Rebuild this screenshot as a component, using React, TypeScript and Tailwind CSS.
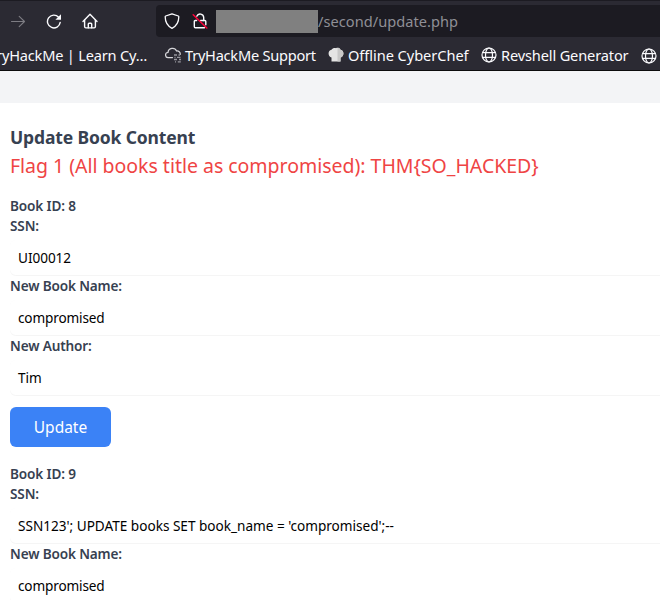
import { ReactNode } from "react"
import clsx from "clsx"

function ForwardIcon() {
  return (
    <svg className="size-4" viewBox="0 0 16 16" fill="none" stroke="#7d7c83" strokeWidth="1.1" strokeLinecap="round" strokeLinejoin="round">
      <path d="M1.5 8.5h13M9.2 3.3l5.3 5.2-5.3 5.2" />
    </svg>
  )
}

function ReloadIcon() {
  return (
    <svg className="size-4" viewBox="0 0 16 16" fill="none" stroke="#fbfbfe" strokeWidth="1.4" strokeLinecap="round">
      <path d="M14.2 9.4A6.4 6.4 0 1 1 12.6 4.2" />
      <path d="M15 1.2v5.6H9.4z" fill="#fbfbfe" stroke="none" />
    </svg>
  )
}

function HomeIcon() {
  return (
    <svg className="size-4" viewBox="0 0 16 16" fill="none" stroke="#fbfbfe" strokeWidth="1.4" strokeLinecap="round" strokeLinejoin="round">
      <path d="M1 8.4 8 1.3l7 7.1" />
      <path d="M2.6 7v6.6q0 1.3 1.3 1.3h8.2q1.3 0 1.3-1.3V7" />
      <path d="M6.3 14.7v-3.6q0-.8.8-.8h1.8q.8 0 .8.8v3.6" />
    </svg>
  )
}

function ShieldIcon() {
  return (
    <svg className="size-4" viewBox="0 0 16 16" fill="none" stroke="#fbfbfe" strokeWidth="1.3" strokeLinejoin="round">
      <path d="M8 .8 14.3 3q.5.2.5.8C14.8 9 12.6 13 8 15.3 3.4 13 1.2 9 1.2 3.8q0-.6.5-.8z" />
    </svg>
  )
}

function InsecureIcon() {
  return (
    <svg className="size-4" viewBox="0 0 16 16" fill="none" stroke="#fbfbfe" strokeWidth="1.4" strokeLinecap="round">
      <path d="M4.8 3.2A3.6 3.6 0 0 1 11.700 4.500V7.500" />
      <path d="M8.600 7.500h4.200q1 0 1 1v3.200M4.600 7.500H3.300q-1 0-1 1v5q0 1.200 1 1.200h9.200" />
      <path d="m1.200 1.700 13.600 13.300" stroke="#ff0039" strokeWidth="1.500" />
    </svg>
  )
}

function CloudIcon() {
  return (
    <svg className="h-4 w-[17px]" viewBox="0 0 17 16" fill="none" stroke="#d6d6da" strokeWidth="1.2" strokeLinecap="round">
      <path d="M7.5 10.6H3.3A2.6 2.6 0 0 1 3 5.4 4.5 4.5 0 0 1 11.6 4a3.2 3.2 0 0 1 3.7 3.3" />
      <path
        d="M9 8h3M13.500 8h1.500M9.500 10.300h1M12 10.300h3.500M9 12.500h3M14 12.500h2M10 14.800h1M12.800 14.800h3"
        stroke="#98979e"
        strokeWidth="1.3"
        strokeLinecap="butt"
      />
    </svg>
  )
}

function ChefIcon() {
  return (
    <svg className="size-4" viewBox="0 0 16 16">
      <path d="M3.500 14.600V10.400C-.4 9.800-.4 3.100 3.500 2.700 4.500.8 7 .6 8 1.200c1.500-.8 3.800-.5 4.500 1.500 3.900.4 3.900 7.100 0 7.700v4.200z" fill="#e4e4e4" />
      <path d="M9.500 1c1.200 0 2.500.4 3 1.700 3.900.4 3.900 7.100 0 7.700v4.200H9.500z" fill="#c8c8c8" />
    </svg>
  )
}

function GlobeIcon() {
  return (
    <svg className="size-4 shrink-0" viewBox="0 0 16 16" fill="none" stroke="#fbfbfe" strokeWidth="1.2">
      <circle cx="8" cy="8" r="7" />
      <ellipse cx="8" cy="8" rx="3.5" ry="7" />
      <path d="M1.600 5.700h12.800M1.600 10.300h12.800" />
    </svg>
  )
}

function Label({ children }: { children: ReactNode }) {
  return (
    <div className="text-[13.6px] leading-5 font-semibold tracking-[-0.15px] whitespace-nowrap text-[#374151]">{children}</div>
  )
}

function Field({ className, children }: { className?: string; children: ReactNode }) {
  return (
    <div className="mt-1 h-9 rounded-md bg-white p-2 shadow-[0_0_1px_0_rgba(0,0,0,0.02),inset_0_-1px_0_0_rgba(0,0,0,0.04)]">
      <div className={clsx("text-[13.6px] leading-5 whitespace-nowrap text-black", className)}>{children}</div>
    </div>
  )
}

export default function App() {
  return (
    <div className="h-[600px] w-[660px] overflow-hidden bg-white font-['Noto_Sans',sans-serif]">
      {/* Browser toolbar */}
      <header className="h-[71px] border-t border-b border-t-[#1c1b22] border-b-[#0c0c0d] bg-[#2b2a33]">
        <div className="flex h-9 items-center pt-1">
          <div className="flex w-[156px] gap-5 pl-2.5">
            <ForwardIcon />
            <ReloadIcon />
            <HomeIcon />
          </div>
          <div className="flex h-8 flex-1 items-center rounded-l bg-[#1c1b22] pl-2">
            <ShieldIcon />
            <div className="ml-3">
              <InsecureIcon />
            </div>
            <div className="ml-2 h-[23px] w-[102px] bg-[#808080]" />
            <span className="pt-px text-[14.6px] tracking-[0.03px] text-[#8f8f96]">/second/update.php</span>
          </div>
        </div>
        <nav className="flex h-[33px] items-center pt-1 text-[14.6px] whitespace-nowrap text-[#fbfbfe]">
          <div className="flex w-[165px] justify-end pr-[18px]">
            <span className="tracking-[-0.2px]">TryHackMe | Learn Cy…</span>
          </div>
          <div className="flex w-[163px] items-center gap-[3px]">
            <CloudIcon />
            <span className="tracking-[-0.25px]">TryHackMe Support</span>
          </div>
          <div className="flex w-[153px] items-center gap-1">
            <ChefIcon />
            <span className="tracking-[-0.05px]">Offline CyberChef</span>
          </div>
          <div className="flex w-[160px] shrink-0 items-center gap-1">
            <GlobeIcon />
            <span className="tracking-[-0.15px]">Revshell Generator</span>
          </div>
          <GlobeIcon />
        </nav>
      </header>

      <div className="h-8 bg-[#f3f4f6]" />

      <main className="-mr-2 pt-5 pl-2.5">
        <h1 className="text-[17.5px] leading-7 font-bold tracking-[-0.14px] text-[#374151]">Update Book Content</h1>
        <p className="mt-px text-[19.5px] leading-7 tracking-[-0.02px] whitespace-nowrap text-[#ef4444]">
          Flag 1 (All books title as compromised): THM&#123;SO_HACKED&#125;
        </p>

        <section className="pt-4">
          <Label>Book ID: 8</Label>
          <Label>SSN:</Label>
          <Field className="tracking-[-0.05px]">UI00012</Field>
          <Label>New Book Name:</Label>
          <Field className="tracking-[-0.15px]">compromised</Field>
          <Label>New Author:</Label>
          <Field className="tracking-normal">Tim</Field>
          <button className="mt-[11px] block h-10 w-[101px] rounded-md bg-[#3b82f6] pt-0.5 text-[15.5px] text-white">Update</button>
        </section>

        <section className="pt-[17px]">
          <Label>Book ID: 9</Label>
          <Label>SSN:</Label>
          <Field className="tracking-[-0.01px]">SSN123'; UPDATE books SET book_name = 'compromised';--</Field>
          <Label>New Book Name:</Label>
          <Field className="tracking-[-0.15px]">compromised</Field>
        </section>
      </main>
    </div>
  )
}
